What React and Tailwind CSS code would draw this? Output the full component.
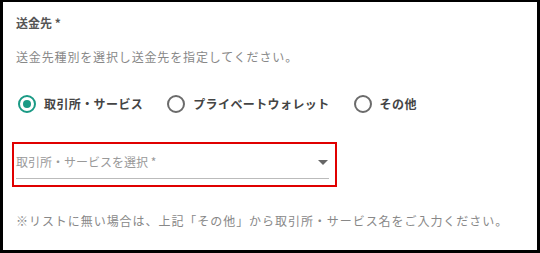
const options = [
  { id: "exchange", label: "取引所・サービス" },
  { id: "wallet", label: "プライベートウォレット" },
  { id: "other", label: "その他" },
];

function Radio({ checked, label }) {
  return (
    <label className="flex items-center gap-[8px] cursor-pointer">
      <span
        className={
          checked
            ? "flex h-[18px] w-[18px] items-center justify-center rounded-full border-2 border-[#1a9a85]"
            : "flex h-[18px] w-[18px] items-center justify-center rounded-full border-2 border-[#6b6b6b]"
        }
      >
        {checked && <span className="h-[8px] w-[8px] rounded-full bg-[#1a9a85]" />}
      </span>
      <span className="text-[12px] font-bold tracking-[0.4px] text-[#444]">{label}</span>
    </label>
  );
}

export default function App() {
  const selected = "exchange";
  return (
    <div
      className="h-[253px] w-[540px] border-b-[3px] border-l-[3px] border-r-[3px] border-t-[2px] border-black bg-white"
      style={{ fontFamily: '"Noto Sans CJK JP", "Noto Sans", sans-serif' }}
    >
      <div className="pl-[13px] pt-[12px]">
        <h3 className="text-[12px] font-bold leading-[18px] text-[#555]">送金先 *</h3>
        <p className="mt-[16px] text-[12px] leading-[18px] tracking-[0.85px] text-[#888]">
          送金先種別を選択し送金先を指定してください。
        </p>
        <div className="mt-[29px] flex items-center gap-[24px] pl-[2px]">
          {options.map((o) => (
            <Radio key={o.id} checked={o.id === selected} label={o.label} />
          ))}
        </div>
        <div className="mt-[29px] -ml-[4px] w-[325px] border-2 border-[#e00000] px-[2px] pb-[6px] pt-[7px]">
          <div className="mr-[4px] flex items-center justify-between border-b border-[#bbb] pb-[7px] pt-[2px]">
            <span className="text-[12px] leading-[18px] text-[#999]">取引所・サービスを選択 *</span>
            <svg width="10" height="5" viewBox="0 0 10 5" className="mr-[1px]">
              <path d="M0 0 L10 0 L5 5 Z" fill="#666" />
            </svg>
          </div>
        </div>
        <p className="mt-[25px] text-[12px] leading-[18px] tracking-[0.95px] text-[#888]">
          ※リストに無い場合は、上記「その他」から取引所・サービス名をご入力ください。
        </p>
      </div>
    </div>
  );
}
